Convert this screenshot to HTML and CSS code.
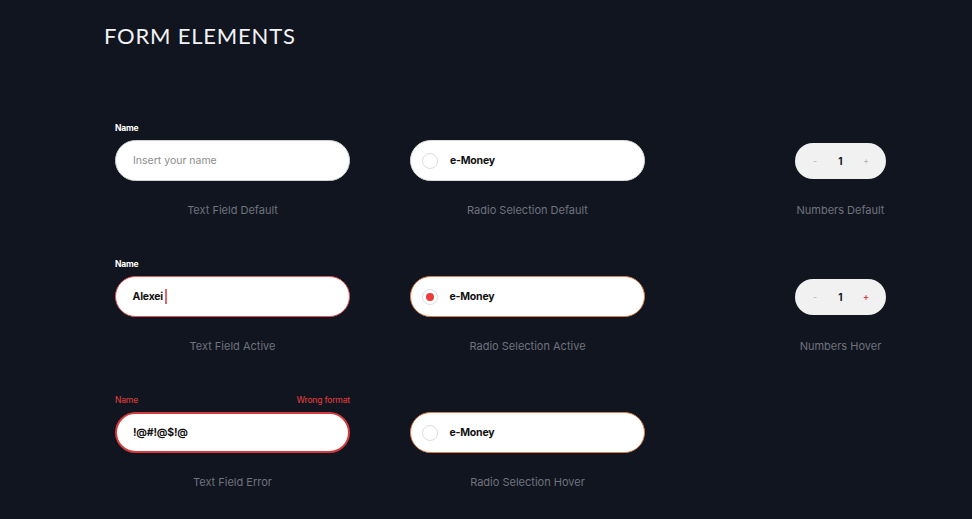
FILE: index.html
```html
<!DOCTYPE html>
<html lang="en">
<head>
<meta charset="utf-8">
<title>Form Elements</title>
<link rel="stylesheet" href="styles.css">
</head>
<body>
<main class="page">
  <h1 class="title">FORM ELEMENTS</h1>
  <div class="grid">
    <!-- Row 1 -->
    <div class="cell">
      <div class="label-row"><span class="label">Name</span></div>
      <div class="field"><div class="input"><span class="placeholder">Insert your name</span></div></div>
      <div class="caption">Text Field Default</div>
    </div>
    <div class="cell">
      <div class="label-row"></div>
      <div class="field"><div class="radio"><span class="dot"></span><span class="radio-text">e-Money</span></div></div>
      <div class="caption">Radio Selection Default</div>
    </div>
    <div class="cell cell-num">
      <div class="label-row"></div>
      <div class="field"><div class="number"><span class="op">-</span><span class="val">1</span><span class="op">+</span></div></div>
      <div class="caption">Numbers Default</div>
    </div>

    <!-- Row 2 -->
    <div class="cell">
      <div class="label-row"><span class="label">Name</span></div>
      <div class="field"><div class="input input-active"><span class="value">Alexei</span><span class="caret"></span></div></div>
      <div class="caption">Text Field Active</div>
    </div>
    <div class="cell">
      <div class="label-row"></div>
      <div class="field"><div class="radio radio-active"><span class="dot dot-on"></span><span class="radio-text">e-Money</span></div></div>
      <div class="caption">Radio Selection Active</div>
    </div>
    <div class="cell cell-num">
      <div class="label-row"></div>
      <div class="field"><div class="number"><span class="op">-</span><span class="val">1</span><span class="op op-hover">+</span></div></div>
      <div class="caption">Numbers Hover</div>
    </div>

    <!-- Row 3 -->
    <div class="cell">
      <div class="label-row"><span class="label label-error">Name</span><span class="label label-error">Wrong format</span></div>
      <div class="field"><div class="input input-error"><span class="value">!@#!@$!@</span></div></div>
      <div class="caption">Text Field Error</div>
    </div>
    <div class="cell">
      <div class="label-row"></div>
      <div class="field"><div class="radio radio-active"><span class="dot"></span><span class="radio-text">e-Money</span></div></div>
      <div class="caption">Radio Selection Hover</div>
    </div>
  </div>
</main>
</body>
</html>
```

FILE: styles.css
```css
* { box-sizing: border-box; }

html, body {
  margin: 0;
  padding: 0;
  background: #111520;
}

body {
  font-family: "Inter", "Noto Sans", "Liberation Sans", sans-serif;
  color: #ffffff;
  width: 972px;
  height: 519px;
  overflow: hidden;
}

.page {
  padding: 22px 0 0 104px;
}

.title {
  margin: 0;
  font-family: "Lato", "Inter", sans-serif;
  font-weight: 400;
  font-size: 22px;
  line-height: 28px;
  letter-spacing: 0.8px;
  color: #f2f3f5;
}

.grid {
  margin-top: 71px;
  margin-left: 11px;
  display: grid;
  grid-template-columns: 295px 385px 91px;
  row-gap: 40px;
}

.cell {
  width: 235px;
  display: flex;
  flex-direction: column;
}

.cell-num {
  width: 91px;
}

.label-row {
  height: 13px;
  margin-bottom: 6px;
  display: flex;
  justify-content: space-between;
  align-items: center;
}

.label {
  font-size: 8.5px;
  font-weight: 700;
  letter-spacing: -0.2px;
  color: #ffffff;
}

.label-error {
  font-weight: 500;
  color: #d83a3a;
}

.field {
  height: 41px;
  display: flex;
  align-items: center;
}

.input {
  width: 100%;
  height: 41px;
  border-radius: 21px;
  background: #ffffff;
  border: 1px solid #cfcfcf;
  display: flex;
  align-items: center;
  padding-left: 17px;
}

.placeholder {
  font-size: 10.5px;
  color: #8d8d8d;
  letter-spacing: 0;
}

.value {
  font-size: 10.5px;
  font-weight: 700;
  color: #111111;
  letter-spacing: -0.2px;
}

.caret {
  width: 1.5px;
  height: 15px;
  margin-left: 2px;
  background: #e4656a;
}

.input-active {
  border: 1.5px solid #e0555a;
  padding-left: 16.5px;
}

.input-error {
  border: 2px solid #d63a3c;
  padding-left: 16px;
}

.radio {
  width: 100%;
  height: 41px;
  border-radius: 21px;
  background: #ffffff;
  border: 1px solid #d9d9d9;
  display: flex;
  align-items: center;
  padding-left: 11px;
}

.radio-active {
  border: 1.5px solid #d8814e;
  padding-left: 10.5px;
}

.dot {
  width: 16px;
  height: 16px;
  border-radius: 50%;
  border: 1px solid #dedede;
  background: #ffffff;
  display: flex;
  align-items: center;
  justify-content: center;
  margin-right: 12px;
}

.dot-on::after {
  content: "";
  width: 8px;
  height: 8px;
  border-radius: 50%;
  background: #ee3b3b;
}

.radio-text {
  font-size: 10.5px;
  font-weight: 700;
  color: #111111;
  letter-spacing: -0.2px;
}

.number {
  width: 91px;
  height: 36px;
  border-radius: 18px;
  background: #f1f1f1;
  display: flex;
  align-items: center;
  justify-content: space-between;
  padding: 0 16px;
}

.op {
  font-size: 9px;
  color: #b5b5b5;
  width: 8px;
  text-align: center;
}

.op-hover {
  color: #e8444a;
  font-weight: 700;
}

.val {
  font-size: 10px;
  font-weight: 700;
  color: #111111;
}

.caption {
  margin-top: 22px;
  font-size: 11px;
  line-height: 14px;
  color: #6f737c;
  text-align: center;
  white-space: nowrap;
}
```
